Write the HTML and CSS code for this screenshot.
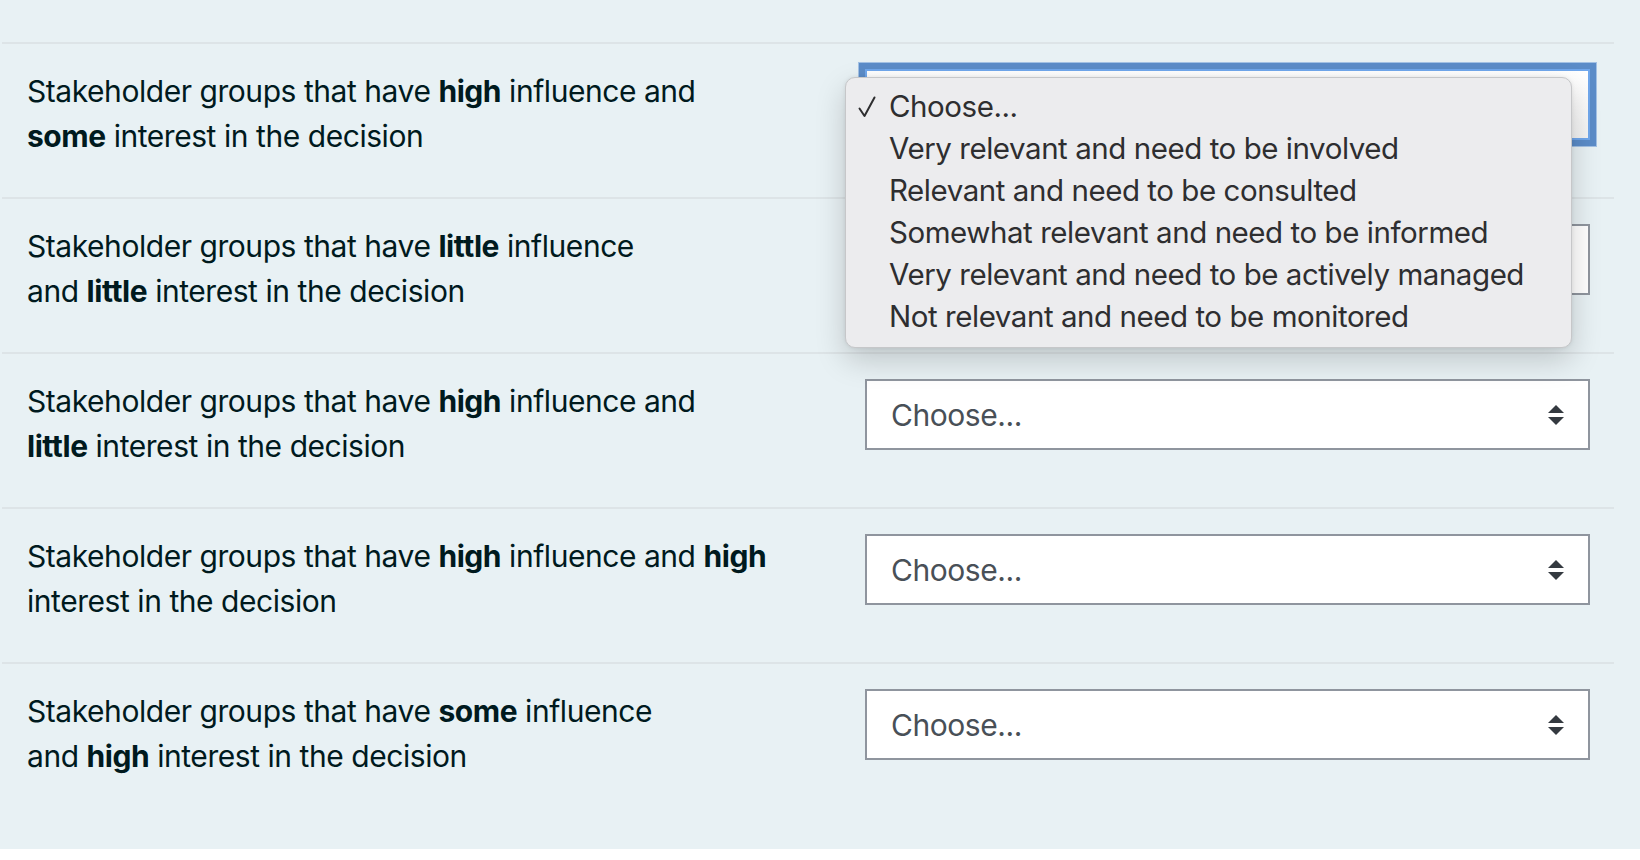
FILE: index.html
```html
<!DOCTYPE html>
<html lang="en">
  <head>
    <meta charset="UTF-8" />
    <meta name="viewport" content="width=device-width, initial-scale=1.0" />
    <title>Stakeholder matching</title>
    <link rel="stylesheet" href="styles.css">
  </head>
  <body>
    <div class="formulation">
      <div class="match-row">
        <div class="text">Stakeholder groups that have <b>high</b> influence and<br><b>some</b> interest in the decision</div>
        <div class="control">
          <div class="select focused"><span class="value"></span></div>
          <ul class="menu">
            <li class="checked">
              <svg class="tick" viewBox="0 0 18 22" width="18" height="22"><path d="M1.5 12.5L6.5 20L16.5 1.5" fill="none" stroke="#2e2e30" stroke-width="2" stroke-linecap="round" stroke-linejoin="round"/></svg>
              Choose...
            </li>
            <li>Very relevant and need to be involved</li>
            <li>Relevant and need to be consulted</li>
            <li>Somewhat relevant and need to be informed</li>
            <li>Very relevant and need to be actively managed</li>
            <li>Not relevant and need to be monitored</li>
          </ul>
        </div>
      </div>
      <div class="match-row">
        <div class="text">Stakeholder groups that have <b>little</b> influence<br>and <b>little</b> interest in the decision</div>
        <div class="control">
          <div class="select">
            <span class="value">Choose...</span>
            <svg class="arrows" viewBox="0 0 4 5" width="16" height="20"><path d="M2 0L0 2h4zm0 5L0 3h4z" fill="#343a40"/></svg>
          </div>
        </div>
      </div>
      <div class="match-row">
        <div class="text">Stakeholder groups that have <b>high</b> influence and<br><b>little</b> interest in the decision</div>
        <div class="control">
          <div class="select">
            <span class="value">Choose...</span>
            <svg class="arrows" viewBox="0 0 4 5" width="16" height="20"><path d="M2 0L0 2h4zm0 5L0 3h4z" fill="#343a40"/></svg>
          </div>
        </div>
      </div>
      <div class="match-row">
        <div class="text">Stakeholder groups that have <b>high</b> influence and <b>high</b><br>interest in the decision</div>
        <div class="control">
          <div class="select">
            <span class="value">Choose...</span>
            <svg class="arrows" viewBox="0 0 4 5" width="16" height="20"><path d="M2 0L0 2h4zm0 5L0 3h4z" fill="#343a40"/></svg>
          </div>
        </div>
      </div>
      <div class="match-row">
        <div class="text">Stakeholder groups that have <b>some</b> influence<br>and <b>high</b> interest in the decision</div>
        <div class="control">
          <div class="select">
            <span class="value">Choose...</span>
            <svg class="arrows" viewBox="0 0 4 5" width="16" height="20"><path d="M2 0L0 2h4zm0 5L0 3h4z" fill="#343a40"/></svg>
          </div>
        </div>
      </div>
    </div>
  </body>
</html>
```

FILE: styles.css
```css
body {
  margin: 0;
  background-color: #fff;
  font-family: Inter, "Noto Sans", sans-serif;
  letter-spacing: -0.45px;
}

.formulation {
  height: 807px;
  padding-top: 42px;
  background-color: #e8f1f4;
  color: #001a1e;
}

.match-row {
  display: grid;
  grid-template-columns: 863px 725px;
  margin: 0 26px 0 2px;
  padding: 25px 0 38px;
  border-top: 2px solid #dde4e7;
}

.text {
  padding-left: 25px;
  font-size: 30px;
  line-height: 45px;
}

.text b {
  font-weight: 700;
}

.control {
  position: relative;
}

.select {
  display: flex;
  align-items: center;
  justify-content: space-between;
  box-sizing: border-box;
  height: 71px;
  padding: 0 24px;
  border: 2px solid #8f959e;
  background-color: #fff;
  color: #495057;
  font-size: 30px;
}

.select.focused {
  border-color: #70a7ec;
  background: linear-gradient(#fff, #f3f3f3);
  box-shadow: 0 0 0 6px #5b8cc8, 0 0 0 7px #a3c1e4;
}

.arrows {
  display: block;
}

.menu {
  position: absolute;
  z-index: 10;
  top: 8px;
  left: -20px;
  width: 727px;
  box-sizing: border-box;
  margin: 0;
  padding: 7px 0 10px;
  list-style: none;
  background-color: #ececee;
  border: 1px solid #c6c7c9;
  border-radius: 10px;
  box-shadow: 0 12px 30px rgba(0, 0, 0, 0.18), 0 0 4px rgba(0, 0, 0, 0.08);
  color: #2e2e30;
  font-size: 29.5px;
}

.menu li {
  position: relative;
  height: 42px;
  line-height: 42px;
  padding-left: 43px;
}

.menu .tick {
  position: absolute;
  left: 12px;
  top: 11px;
}
```
